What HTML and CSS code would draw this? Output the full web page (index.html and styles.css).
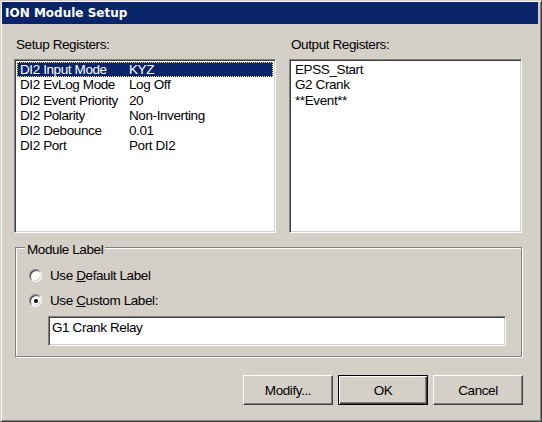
FILE: index.html
```html
<!DOCTYPE html>
<html>
<head>
<meta charset="utf-8">
<title>ION Module Setup</title>
<link rel="stylesheet" href="styles.css">
</head>
<body>
<div class="window">
  <div class="titlebar">ION Module Setup</div>
  <div class="content">
    <div class="lists">
      <div class="col col-setup">
        <div class="label">Setup Registers:</div>
        <div class="listbox">
          <div class="row selected"><span class="name">DI2 Input Mode</span><span class="val">KYZ</span></div>
          <div class="row"><span class="name">DI2 EvLog Mode</span><span class="val">Log Off</span></div>
          <div class="row"><span class="name">DI2 Event Priority</span><span class="val">20</span></div>
          <div class="row"><span class="name">DI2 Polarity</span><span class="val">Non-Inverting</span></div>
          <div class="row"><span class="name">DI2 Debounce</span><span class="val">0.01</span></div>
          <div class="row"><span class="name">DI2 Port</span><span class="val">Port DI2</span></div>
        </div>
      </div>
      <div class="col col-output">
        <div class="label">Output Registers:</div>
        <div class="listbox">
          <div class="row">EPSS_Start</div>
          <div class="row">G2 Crank</div>
          <div class="row">**Event**</div>
        </div>
      </div>
    </div>
    <div class="group">
      <span class="legend">Module Label</span>
      <div class="radio-row"><span class="radio"></span><span>Use <u>D</u>efault Label</span></div>
      <div class="radio-row"><span class="radio checked"></span><span>Use <u>C</u>ustom Label:</span></div>
      <div class="textbox">G1 Crank Relay</div>
    </div>
    <div class="buttons">
      <button class="btn">Modify...</button>
      <button class="btn default">OK</button>
      <button class="btn">Cancel</button>
    </div>
  </div>
</div>
</body>
</html>
```

FILE: styles.css
```css
html, body {
  margin: 0;
  padding: 0;
  background: #d4d0c8;
}
body {
  font-family: "Liberation Sans", Arial, sans-serif;
  font-size: 13.5px;
  letter-spacing: -0.4px;
  color: #000;
}
.window {
  width: 542px;
  height: 422px;
  box-sizing: border-box;
  border: 1px solid;
  border-color: #d4d0c8 #404040 #404040 #d4d0c8;
  box-shadow: inset 1px 1px #fff, inset -1px -1px #808080;
  padding: 1px 3px 2px 1px;
  background: #d4d0c8;
}
.titlebar {
  height: 22px;
  line-height: 22px;
  background: #0a246a;
  color: #fff;
  font-family: "DejaVu Sans", sans-serif;
  font-weight: bold;
  font-size: 12px;
  letter-spacing: 0;
  padding-left: 3px;
}
.content {
  padding: 13px 15px 0 12px;
}
.lists {
  display: flex;
  gap: 13px;
}
.col-setup { width: 262px; }
.col-output { width: 233px; }
.label {
  height: 15px;
  line-height: 15px;
  padding-left: 2px;
  margin-bottom: 7px;
}
.listbox {
  height: 174px;
  box-sizing: border-box;
  border: 1px solid;
  border-color: #808080 #fff #fff #808080;
  box-shadow: inset 1px 1px #404040, inset -1px -1px #d4d0c8;
  background: #fff;
  padding: 2px 2px 1px 2px;
}
.row {
  height: 15.3px;
  line-height: 15.3px;
  padding-left: 3px;
  white-space: nowrap;
  display: flex;
}
.row .name {
  width: 109px;
}
.row.selected {
  background: #0a246a;
  color: #fff;
  outline: 1px dotted #f5db95;
  outline-offset: -1px;
}
.group {
  position: relative;
  margin: 14px 1px 0 1px;
  height: 110px;
  box-sizing: border-box;
  border: 1px solid #808080;
  box-shadow: inset 1px 1px #fff, 1px 1px #fff;
  padding: 15px 15px 10px 13px;
}
.legend {
  position: absolute;
  top: -6px;
  left: 9px;
  line-height: 15px;
  padding: 0 2px;
  background: #d4d0c8;
}
.radio-row {
  height: 25px;
  display: flex;
  align-items: center;
}
.radio {
  position: relative;
  width: 13px;
  height: 13px;
  box-sizing: border-box;
  border-radius: 50%;
  background: #fff;
  border: 1px solid;
  border-color: #808080 #fff #fff #808080;
  box-shadow: inset 1px 1px #404040, inset -1px -1px #d4d0c8;
  margin-right: 8px;
  flex: none;
}
.radio.checked::after {
  content: "";
  position: absolute;
  left: 3.5px;
  top: 3.5px;
  width: 4px;
  height: 4px;
  border-radius: 50%;
  background: #000;
}
.textbox {
  margin: 3px 0 0 19px;
  height: 30px;
  box-sizing: border-box;
  border: 1px solid;
  border-color: #808080 #fff #fff #808080;
  box-shadow: inset 1px 1px #404040, inset -1px -1px #d4d0c8;
  background: #fff;
  padding: 3px 2px 0 3px;
  line-height: 15px;
}
.buttons {
  display: flex;
  justify-content: flex-end;
  gap: 5px;
  margin-top: 18px;
}
.btn {
  width: 90px;
  height: 30px;
  box-sizing: border-box;
  font: inherit;
  letter-spacing: inherit;
  color: #000;
  padding: 0;
  background: #d4d0c8;
  border: 1px solid;
  border-color: #fff #404040 #404040 #fff;
  box-shadow: inset -1px -1px #808080, inset 1px 1px #d4d0c8;
}
.btn.default {
  border: 1px solid #000;
  box-shadow: inset 1px 1px #fff, inset -1px -1px #404040, inset -2px -2px #808080;
}
```
